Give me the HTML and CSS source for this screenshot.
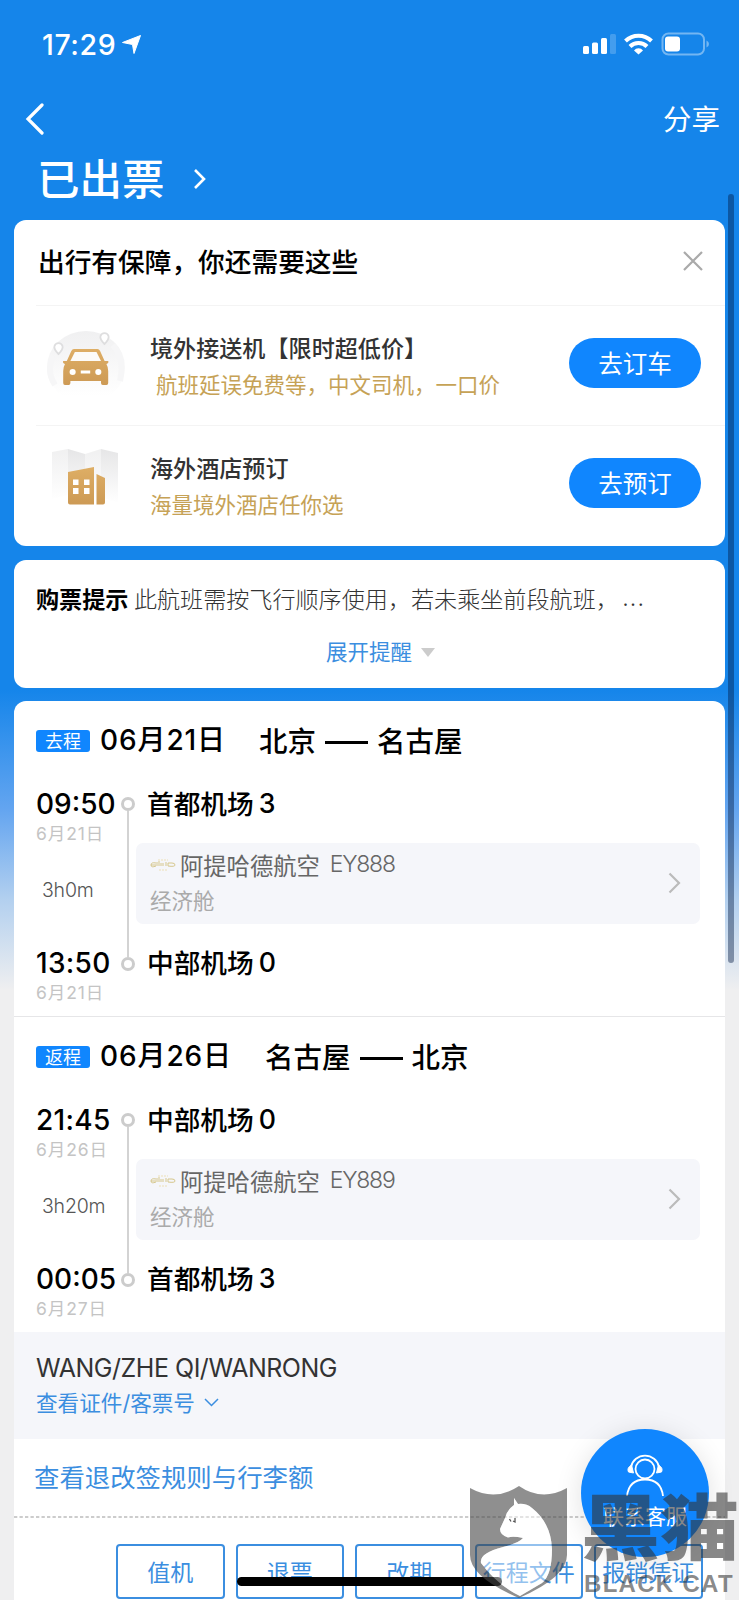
FILE: index.html
```html
<!DOCTYPE html>
<html lang="zh-CN">
<head>
<meta charset="utf-8">
<title>已出票</title>
<link rel="stylesheet" href="styles.css">
</head>
<body>
<div class="screen">
  <div class="status">
    <span class="clock">17:29</span>
    <svg class="loc" width="19" height="19" viewBox="0 0 19 19"><path d="M18.500 .5 L12 18.500 L10.500 9.500 L.5 7.500 Z" fill="#fff" stroke="#fff" stroke-linejoin="round"/></svg>
    <svg class="signals" width="130" height="24" viewBox="0 0 130 24">
      <g fill="#fff"><rect x="1" y="14" width="6" height="8" rx="1.500"/><rect x="10" y="10.500" width="6" height="11.500" rx="1.500"/><rect x="19" y="6" width="6" height="16" rx="1.500"/><rect x="28" y="2" width="6" height="20" rx="1.500" opacity=".2"/>
      <rect x="83" y="4.500" width="15" height="15" rx="3"/><path d="M52 18.500 a5.500 5.500 0 0 1 9 0 l-4.500 4 z"/></g>
      <g fill="none" stroke="#fff" stroke-width="4"><path d="M43.500 9 a18.500 18.500 0 0 1 26 0"/><path d="M48 14.500 a12 12 0 0 1 17 0"/></g>
      <g opacity=".4"><rect x="80.500" y="1.500" width="41.500" height="21" rx="6" fill="none" stroke="#fff" stroke-width="2"/><path d="M124.500 8.500 v7 q2.500-1 2.500-3.500 t-2.500-3.500z" fill="#fff"/></g>
    </svg>
  </div>
  <div class="nav">
    <svg width="20" height="34" viewBox="0 0 20 34"><path d="M18 3 L4 17 L18 31" fill="none" stroke="#fff" stroke-width="3.200" stroke-linecap="round"/></svg>
    <span class="share">分享</span>
  </div>
  <div class="heading">
    <span>已出票</span>
    <svg width="14" height="22" viewBox="0 0 14 22"><path d="M2 2 L11 11 L2 20" fill="none" stroke="#fff" stroke-width="2.600"/></svg>
  </div>

  <section class="card promo">
    <div class="promo-head"><span>出行有保障，你还需要这些</span>
      <svg width="20" height="20" viewBox="0 0 20 20"><path d="M1 1 L19 19 M19 1 L1 19" stroke="#aaa" stroke-width="2.200"/></svg>
    </div>
    <div class="promo-row">
      <svg class="thumb" width="86" height="74" viewBox="0 0 86 74">
        <defs><linearGradient id="fade" x1="0" y1="0" x2="0" y2="1"><stop offset="0" stop-color="#f0f0f1"/><stop offset=".9" stop-color="#fff"/></linearGradient>
        <linearGradient id="gold" x1="0" y1="0" x2="0" y2="1"><stop offset="0" stop-color="#deae65"/><stop offset="1" stop-color="#cd9a55"/></linearGradient></defs>
        <ellipse cx="43" cy="40" rx="39" ry="36" fill="url(#fade)"/><path d="M10 30 q-7 14 2 28 M70 18 q12 14 7 36" stroke="#f6f6f7" stroke-width="6" fill="none"/>
        <g fill="#fff" stroke="#dededf" stroke-width="1.800"><path d="M15.500 27 q-5-5-4-8 a4.200 4.200 0 0 1 8 0 q1 3-4 8z"/><path d="M61.500 17 q-5-5-4-8 a4.200 4.200 0 0 1 8 0 q1 3-4 8z"/></g>
        <g transform="translate(2.200 0) scale(.9 1)"><path d="M32 22 h26 q2 0 3 2 l5 10 h4 q1 2-2 3 q2 3 2 7 v12 q0 2-2 2 h-4 q-2 0-2-2 v-2 h-34 v2 q0 2-2 2 h-4 q-2 0-2-2 v-12 q0-4 2-7 q-3-1-2-3 h4 l5-10 q1-2 3-2z" fill="url(#gold)"/>
        <path d="M33 25 h24 l5 9 H28z" fill="#fcfbf8"/><ellipse cx="30.500" cy="45" rx="3.400" ry="3" fill="#fff"/><ellipse cx="59" cy="45" rx="3.400" ry="3" fill="#fff"/><rect x="39.500" y="43.500" width="10.500" height="3" fill="#fff"/></g>
      </svg>
      <div class="info"><b>境外接送机【限时超低价】</b><i class="inset">航班延误免费等，中文司机，一口价</i></div>
      <span class="pill">去订车</span>
    </div>
    <div class="promo-row">
      <svg class="thumb" width="86" height="74" viewBox="3 0 86 74">
        <defs><linearGradient id="map" x1="0" y1="0" x2="0" y2="1"><stop offset="0" stop-color="#e6e6e7"/><stop offset="1" stop-color="#fff"/></linearGradient></defs>
        <path d="M12 5 L28 2 V48 L12 52z M45 7 L61 2 V50 L45 54z" fill="url(#map)" opacity=".6"/><path d="M28 2 L45 7 V54 L28 48z M61 2 L78 6 V56 L61 50z" fill="url(#map)"/>
        <path d="M28 25 L54 20 V57.500 H30 q-2 0-2-2z M56.500 27 L65 31 V55.500 q0 2-2 2 h-6.500z" fill="url(#gold)"/>
        <path d="M33 32.500h5.500v5.500h-5.500z M44 32.500h5.500v5.500h-5.500z M33 41h5.500v6h-5.500z M44 41h5.500v6h-5.500z" fill="#fff"/>
      </svg>
      <div class="info"><b>海外酒店预订</b><i>海量境外酒店任你选</i></div>
      <span class="pill">去预订</span>
    </div>
  </section>

  <section class="card notice">
    <div class="notice-text"><b>购票提示</b><span>此航班需按飞行顺序使用，若未乘坐前段航班，</span><em>...</em></div>
    <div class="expand"><span>展开提醒</span><svg width="14" height="9" viewBox="0 0 14 9"><path d="M0 0h14L7 9z" fill="#ccc"/></svg></div>
  </section>

  <section class="card trip">
    <div class="leg">
      <div class="leg-title"><span class="tag">去程</span><span class="day">06月21日</span><span class="city">北京</span><s></s><span class="city">名古屋</span></div>
      <div class="leg-body">
        <div class="times"><strong>09:50</strong><small>6月21日</small><span class="dur">3h0m</span><strong class="wide">13:50</strong><small>6月21日</small></div>
        <div class="rail"><u></u><hr><u></u></div>
        <div class="places"><div class="place">首都机场<span>3</span></div>
          <div class="flight"><div><p><svg width="26" height="14" viewBox="0 0 26 14"><path d="M8 2 h10 M9 12 h9" stroke="#efe8cd" stroke-width="1.600" stroke-dasharray="2 1"/><path d="M6 5 q-5-1-5 2 t5 1 M1 7h5 M7 4v4 M9 3v5 M11 5v3 M13 5v3 M16 4v4 M18 5h4q3 0 3 2t-7 1z" fill="none" stroke="#d6c78c"/></svg>阿提哈德航空<span>EY888</span></p><q>经济舱</q></div>
            <svg width="13" height="22" viewBox="0 0 13 22"><path d="M1.500 1.500 L11 11 L1.500 20.500" fill="none" stroke="#bbb" stroke-width="2.200"/></svg></div>
          <div class="place">中部机场<span>0</span></div></div>
      </div>
    </div>
    <div class="leg second">
      <div class="leg-title"><span class="tag">返程</span><span class="day">06月26日</span><span class="city">名古屋</span><s></s><span class="city">北京</span></div>
      <div class="leg-body">
        <div class="times"><strong class="wide">21:45</strong><small>6月26日</small><span class="dur">3h20m</span><strong>00:05</strong><small>6月27日</small></div>
        <div class="rail"><u></u><hr><u></u></div>
        <div class="places"><div class="place">中部机场<span>0</span></div>
          <div class="flight"><div><p><svg width="26" height="14" viewBox="0 0 26 14"><path d="M8 2 h10 M9 12 h9" stroke="#efe8cd" stroke-width="1.600" stroke-dasharray="2 1"/><path d="M6 5 q-5-1-5 2 t5 1 M1 7h5 M7 4v4 M9 3v5 M11 5v3 M13 5v3 M16 4v4 M18 5h4q3 0 3 2t-7 1z" fill="none" stroke="#d6c78c"/></svg>阿提哈德航空<span>EY889</span></p><q>经济舱</q></div>
            <svg width="13" height="22" viewBox="0 0 13 22"><path d="M1.500 1.500 L11 11 L1.500 20.500" fill="none" stroke="#bbb" stroke-width="2.200"/></svg></div>
          <div class="place">首都机场<span>3</span></div></div>
      </div>
    </div>
    <div class="passenger"><div class="name">WANG/ZHE QI/WANRONG</div><div class="docs">查看证件/客票号<svg width="15" height="9" viewBox="0 0 15 9"><path d="M1 1 L7.500 7.500 L14 1" fill="none" stroke="#3b8ee0" stroke-width="1.500"/></svg></div></div>
    <div class="rules">查看退改签规则与行李额</div>
    <svg class="dashes" width="711" height="2"><path d="M0 1H711" stroke="#999" stroke-width="1.200" stroke-dasharray="3.300 2.200"/></svg>
    <div class="actions"><span>值机</span><span>退票</span><span>改期</span><span>行程文件</span><span>报销凭证</span></div>
  </section>

  <div class="scrollbar"></div>
  <div class="home"></div>
  <div class="service">
    <svg width="40" height="43" viewBox="0 0 40 43" fill="none" stroke="#fff" stroke-width="1.800"><circle cx="20" cy="15" r="9.500"/><path d="M6 13 a14.300 14.300 0 0 1 28 0"/><path d="M6.500 11 q-5 3-3 7 l5 1z M33.500 11 q5 3 3 7 l-5 1z" fill="#fff" stroke-width="1"/><path d="M2 42 q2-16.500 18-16.500 t18 16.500"/></svg>
    <span>联系客服</span>
  </div>
  <div class="watermark">
    <svg width="98" height="114" viewBox="0 0 98 114"><path fill-rule="evenodd" fill="#444" fill-opacity=".6" d="M0 3 Q25 17 49 1 Q72 17 97 3 V70 Q97 92 49 113 Q0 92 0 70Z M44 13 L48 19 Q56 18 62 23 Q81 38 82 64 Q82 90 72 98 L50 111 Q27 100 11 78 Q9 68 33 62 Q49 58 53 53 Q43 51 38 52.500 Q30 50 30 44 L35 33 Q37 25 44 20Z"/>
    <path d="M44 13 L48 19 Q56 18 62 23 Q81 38 82 64 Q82 90 72 98 L50 111 Q27 100 11 78 Q9 68 33 62 Q49 58 53 53 Q43 51 38 52.500 Q30 50 30 44 L35 33 Q37 25 44 20Z" fill="#fff" fill-opacity=".45"/><path d="M39.500 34 l1.500 2.500 M45 33 v4 l-2-1" fill="none" stroke="#555" stroke-width="1.300"/></svg>
    <div class="brand"><b>黑猫</b><span>BLACK CAT</span></div>
  </div>
</div>
</body>
</html>
```
FILE: styles.css
```css
* { box-sizing: border-box; }
body { margin: 0; font-family: Inter, "Noto Sans CJK SC", sans-serif; color: #000; }
b, i, em, strong, small { font-weight: inherit; font-style: normal; font-size: inherit; }
svg { display: block; flex: none; }
span, b, i { white-space: nowrap; }
.screen { position: relative; width: 739px; height: 1600px; overflow: hidden; background: linear-gradient(#1585ea 0, #1585ea 690px, #64a5f0 810px, #b3d0ef 900px, #efeff0 990px, #efeff0 100%); }
.status { display: flex; height: 90px; padding: 31px 27px 0 42px; align-items: flex-start; color: #fff; }
.clock { font-size: 28.500px; font-weight: 500; line-height: 28px; letter-spacing: .6px; }
.loc { margin: 4px 0 0 6px; }
.signals { margin: 1px 0 0 auto; }
.nav { display: flex; height: 57px; padding: 0 19px 0 24px; align-items: center; justify-content: space-between; color: #fff; }
.share { padding-top: 3px; font-size: 28.500px; line-height: 30px; }
.heading { display: flex; gap: 28px; height: 72.500px; padding: 6px 0 0 37px; align-items: flex-start; color: #fff; font-size: 42.500px; line-height: 54px; font-weight: 500; }
.heading svg { margin-top: 15px; }
.card { margin-left: 14px; width: 711px; background: #fff; border-radius: 12px; overflow: hidden; }
.promo { height: 326px; }
.promo-head { display: flex; height: 85px; padding: 0 22px 3px 24px; align-items: center; justify-content: space-between; font-size: 26.700px; font-weight: 500; }
.promo-row { display: flex; height: 120.500px; margin-left: 22px; padding: 24px 24px 0 7px; border-top: 1px solid #f4f4f4; align-items: flex-start; }
.thumb { margin-top: -3px; }
.info { display: flex; flex-direction: column; margin: -1px 0 0 21px; flex: 1; }
.info b { font-size: 23.100px; line-height: 40px; font-weight: 500; color: #333; }
.info i { font-size: 21.500px; line-height: 33px; color: #c6a256; }
.info .inset { padding-left: 6px; }
.pill { width: 132px; height: 50px; margin-top: 8px; border-radius: 25px; background: #1086fe; color: #fff; font-size: 24.500px; line-height: 52px; text-align: center; }
.notice { height: 128px; margin-top: 14px; padding: 18px 22px 0; }
.notice-text { display: flex; height: 40px; align-items: center; gap: 5.500px; font-size: 23.100px; color: #333; }
.notice-text b { font-weight: 700; color: #000; }
.notice-text span { font-weight: 300; }
.notice-text em { margin-left: -2px; letter-spacing: 1px; font-weight: 300; }
.expand { display: flex; height: 30px; margin: 18px 0 0 290px; gap: 9px; align-items: center; font-size: 21.500px; color: #3b8ee0; }
.expand svg { margin-top: 3px; }
.trip { height: 1000px; margin-top: 13px; border-radius: 12px 12px 0 0; }
.leg { height: 315px; padding-left: 22px; }
.leg.second { height: 316px; border-top: 1px solid #e6e6e8; }
.leg-title { display: flex; height: 79px; align-items: center; font-size: 28px; font-weight: 500; }
.tag { width: 54px; height: 22px; margin: 1px 10px 0 0; border-radius: 3px; background: #1086fe; color: #fff; font-size: 18px; line-height: 23px; font-weight: 400; text-align: center; }
.day { margin: -4px 33px 0 0; letter-spacing: .9px; }
.city { margin-top: -2px; font-size: 28.500px; }
.leg-title s { width: 43px; height: 3px; margin: 4px 9px 0; background: #000; }
.leg-body { display: flex; height: 230px; }
.times { display: flex; flex-direction: column; width: 84px; padding-top: 6px; }
.times strong { font-size: 28px; line-height: 36px; font-weight: 500; }
.times .wide { letter-spacing: .3px; }
.times small { font-size: 17.500px; line-height: 24px; letter-spacing: .9px; color: #c4c4c4; }
.dur { margin: 30px 0 40px 6px; height: 29px; font-size: 19.500px; line-height: 29px; font-weight: 300; letter-spacing: -.2px; color: #555; }
.rail { display: flex; flex-direction: column; width: 16px; height: 191px; padding-top: 17px; align-items: center; }
.rail u { width: 14px; height: 14px; border: 3px solid #ccc; border-radius: 50%; flex: none; }
.rail hr { flex: 1; width: 2px; margin: 0; border: 0; background: #d3d3d3; }
.places { width: 564px; padding-top: 6px; }
.place { display: flex; height: 36px; padding: 0 0 2px 11px; gap: 5px; align-items: center; font-size: 26.700px; font-weight: 500; }
.flight { display: flex; height: 81px; margin: 21px 0; padding: 4px 19px 0 14px; border-radius: 7px; background: #f5f6fa; justify-content: space-between; }
.flight > svg { margin-top: 25px; }
.flight p { display: flex; margin: 0; height: 36px; align-items: center; font-size: 23.300px; color: #666; }
.flight p svg { margin-right: 4px; }
.flight p span { margin: -1px 0 0 10px; font-size: 23px; font-weight: 300; letter-spacing: -1.250px; }
.flight q { display: block; quotes: none; font-size: 21.500px; line-height: 36px; color: #aaa; }
.passenger { height: 107px; padding: 17px 22px 0; background: #f5f6fa; }
.name { font-size: 25px; line-height: 38px; letter-spacing: -.48px; color: #333; white-space: nowrap; }
.docs { display: flex; height: 34px; margin-top: -2px; align-items: center; gap: 9px; font-size: 21.600px; color: #3b8ee0; }
.docs svg { margin-top: 2px; }
.rules { height: 77px; padding-left: 20px; font-size: 25.400px; line-height: 77px; color: #3b8ee0; }
.actions { display: flex; gap: 11px; margin: 26px 0 0 102px; }
.actions span { width: 108.500px; height: 55px; border: 2px solid #3b8ee0; border-radius: 4px; color: #3b8ee0; font-size: 23px; line-height: 55px; text-align: center; }
.scrollbar { position: absolute; left: 728px; top: 194px; width: 6px; height: 769px; border-radius: 3px; background: rgba(0,25,65,.42); }
.home { position: absolute; left: 237px; top: 1577px; width: 265px; height: 9px; border-radius: 5px; background: #000; }
.service { position: absolute; left: 581px; top: 1429px; width: 128px; height: 128px; padding-top: 25px; border-radius: 50%; background: #1086fe; box-shadow: 0 4px 28px rgba(0,0,0,.12); color: #fff; display: flex; flex-direction: column; align-items: center; font-size: 21px; }
.service span { margin-top: 5px; line-height: 30px; }
.watermark { position: absolute; left: 470px; top: 1485px; display: flex; gap: 16px; color: rgba(50,50,50,.58); }
.brand { display: flex; flex-direction: column; padding-top: 11px; }
.brand b { font-size: 76px; line-height: 64px; font-weight: 900; transform: scale(1.04, .94); }
.brand span { margin-top: 12px; font: bold 24px/24px "Liberation Sans", sans-serif; letter-spacing: 1.300px; }
```
